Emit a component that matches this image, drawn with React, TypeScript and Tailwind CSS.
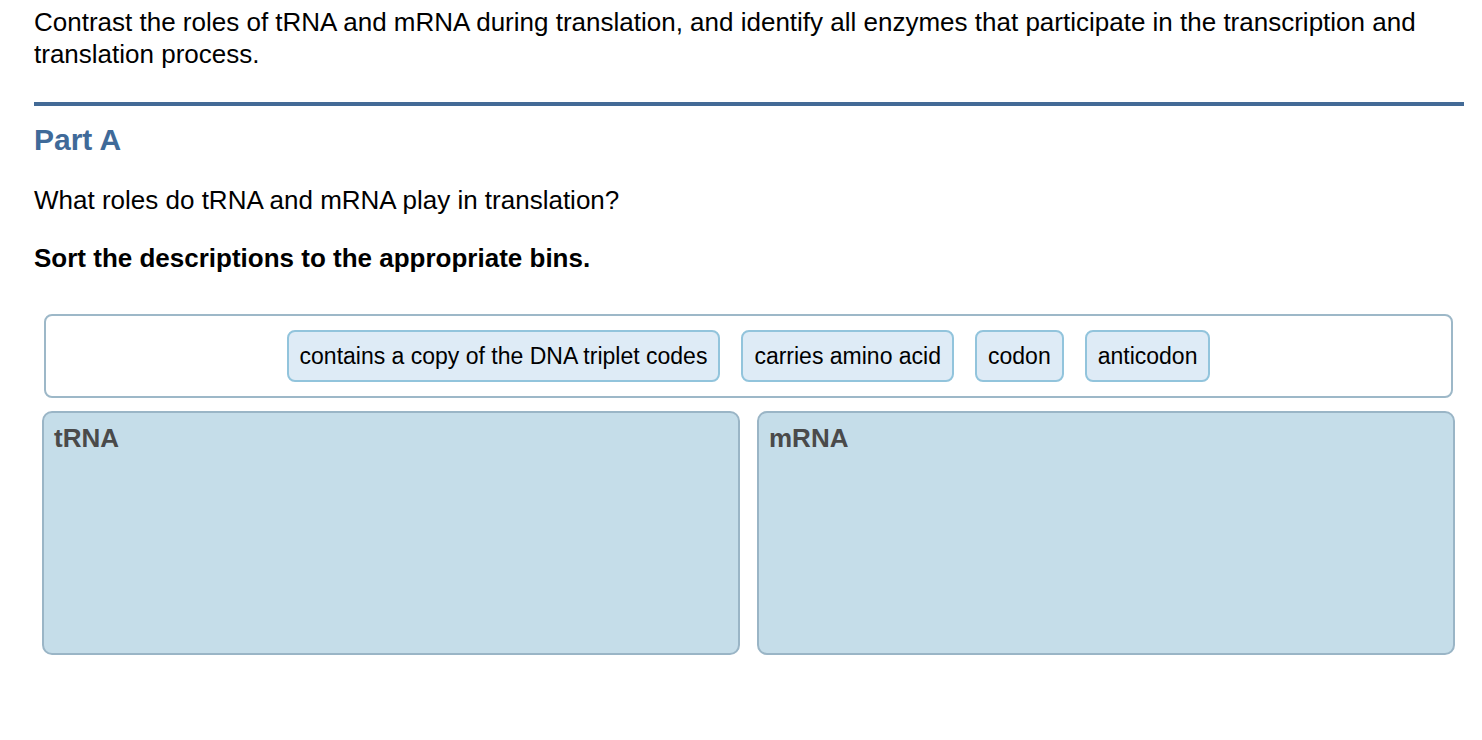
import React from "react";

const items = [
  "contains a copy of the DNA triplet codes",
  "carries amino acid",
  "codon",
  "anticodon",
];

function Bin({ label }: { label: string }) {
  return (
    <div className="h-[244px] rounded-[10px] border-2 border-[#9ab5c6] bg-[#c5dde9] px-[10px] pt-[10px]">
      <div className="text-[26px] font-bold leading-[30px] text-[#4a4a4a]">{label}</div>
    </div>
  );
}

export default function App() {
  return (
    <div className="min-h-[740px] bg-white pl-[34px] pr-[18px] pt-[6px] font-['Liberation_Sans',Arial,sans-serif] text-black">
      <p className="text-[26px] leading-[32px]">
        Contrast the roles of tRNA and mRNA during translation, and identify all enzymes that participate in the
        transcription and translation process.
      </p>

      <div className="mt-[32px] h-[4px] bg-[#436a96]" />

      <h2 className="mt-[16px] text-[30px] font-bold leading-[36px] text-[#3f6a99]">Part A</h2>

      <p className="mt-[26px] text-[26px] leading-[32px]">What roles do tRNA and mRNA play in translation?</p>

      <p className="mt-[26px] text-[26px] font-bold leading-[32px]">Sort the descriptions to the appropriate bins.</p>

      <div className="ml-[10px] mr-[11px] mt-[40px] flex h-[84px] items-center justify-center gap-[21px] rounded-[8px] border-2 border-[#9db8c8] bg-white">
        {items.map((t) => (
          <div
            key={t}
            className="flex h-[52px] items-center rounded-[8px] border-2 border-[#92c4dc] bg-[#deebf6] px-[11px] pt-[1px] text-[23px] leading-none"
          >
            {t}
          </div>
        ))}
      </div>

      <div className="ml-[8px] mr-[9px] mt-[13px] grid grid-cols-2 gap-[17px]">
        <Bin label="tRNA" />
        <Bin label="mRNA" />
      </div>
    </div>
  );
}
